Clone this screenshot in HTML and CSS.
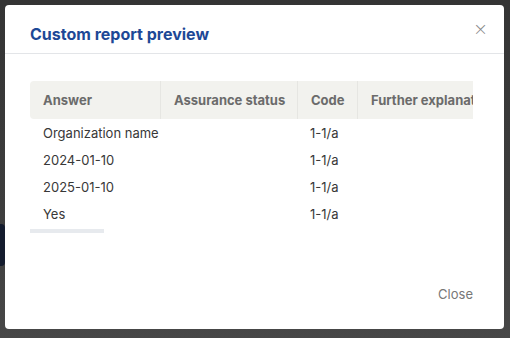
FILE: index.html
```html
<!DOCTYPE html>
<html>
<head lang="en">
    <meta charset="UTF-8">
    <title>Custom report preview</title>
    <link rel="stylesheet" href="styles.css">
</head>
<body>
<div class="backdrop">
    <span class="blob"></span>
    <div class="modal">
        <div class="modal-header">
            <h2 class="modal-title">Custom report preview</h2>
            <span class="modal-x">&#215;</span>
        </div>
        <div class="modal-body">
            <div class="table-wrap">
                <table class="report">
                    <thead>
                    <tr>
                        <th class="c-answer">Answer</th>
                        <th class="c-status">Assurance status</th>
                        <th class="c-code">Code</th>
                        <th class="c-more">Further explanation</th>
                    </tr>
                    </thead>
                    <tbody>
                    <tr><td>Organization name</td><td></td><td>1-1/a</td><td></td></tr>
                    <tr><td>2024-01-10</td><td></td><td>1-1/a</td><td></td></tr>
                    <tr><td>2025-01-10</td><td></td><td>1-1/a</td><td></td></tr>
                    <tr><td>Yes</td><td></td><td>1-1/a</td><td></td></tr>
                    </tbody>
                </table>
            </div>
            <div class="scroll-track"><span class="scroll-thumb"></span></div>
        </div>
        <div class="modal-footer">
            <span class="btn-close">Close</span>
        </div>
    </div>
</div>
</body>
</html>
```

FILE: styles.css
```css
* {
    margin: 0;
    padding: 0;
    box-sizing: border-box;
}

body {
    width: 510px;
    height: 338px;
    overflow: hidden;
    font-family: Inter, "Liberation Sans", sans-serif;
    background-color: #3b3b3b;
}

.backdrop {
    position: relative;
    width: 510px;
    height: 338px;
    padding: 5px 6px 9px 5px;
    background: linear-gradient(180deg, #343434 0%, #3d3d3d 60%, #474747 100%);
}

.blob {
    position: absolute;
    left: -4px;
    top: 224px;
    width: 9px;
    height: 42px;
    border-radius: 4px;
    background-color: #141c2e;
}

.modal {
    position: relative;
    width: 499px;
    height: 324px;
    background-color: #fff;
    border-radius: 4px;
    display: flex;
    flex-direction: column;
}

.modal-header {
    height: 49px;
    padding: 0 25px;
    border-bottom: 1px solid #e3e5e8;
    display: flex;
    align-items: center;
    justify-content: space-between;
}

.modal-title {
    font-size: 16px;
    font-weight: 700;
    color: #1d4896;
    padding-top: 10px;
}

.modal-x {
    font-size: 18px;
    color: #8a8a8a;
    margin-right: -9px;
    margin-top: -1px;
    font-family: "DejaVu Sans", sans-serif;
    font-weight: 300;
}

.modal-body {
    padding: 27px 31px 0 25px;
}

.table-wrap {
    width: 443px;
    overflow: hidden;
}

.report {
    border-collapse: separate;
    border-spacing: 0;
    table-layout: fixed;
    width: 487px;
    font-size: 13px;
    white-space: nowrap;
}

.report th {
    height: 38px;
    text-align: left;
    font-weight: 700;
    color: #6b6b6b;
    background-color: #f2f2ee;
    padding: 0 13px;
    border-left: 1px solid #e6e6e2;
    overflow: hidden;
}

.report th:first-child {
    border-left: 0;
    border-radius: 4px 0 0 4px;
}

.report td {
    height: 27px;
    padding: 0 13px;
    color: #383838;
}

.c-answer {
    width: 130px;
}

.c-status {
    width: 137px;
}

.c-code {
    width: 60px;
}

.c-more {
    width: 160px;
}

.scroll-track {
    height: 5px;
    margin-top: 2px;
}

.scroll-thumb {
    display: block;
    width: 74px;
    height: 4px;
    background-color: #e7eaee;
}

.modal-footer {
    margin-top: auto;
    padding: 0 31px 27px 0;
    display: flex;
    justify-content: flex-end;
}

.btn-close {
    font-size: 13px;
    color: #777;
}
```
